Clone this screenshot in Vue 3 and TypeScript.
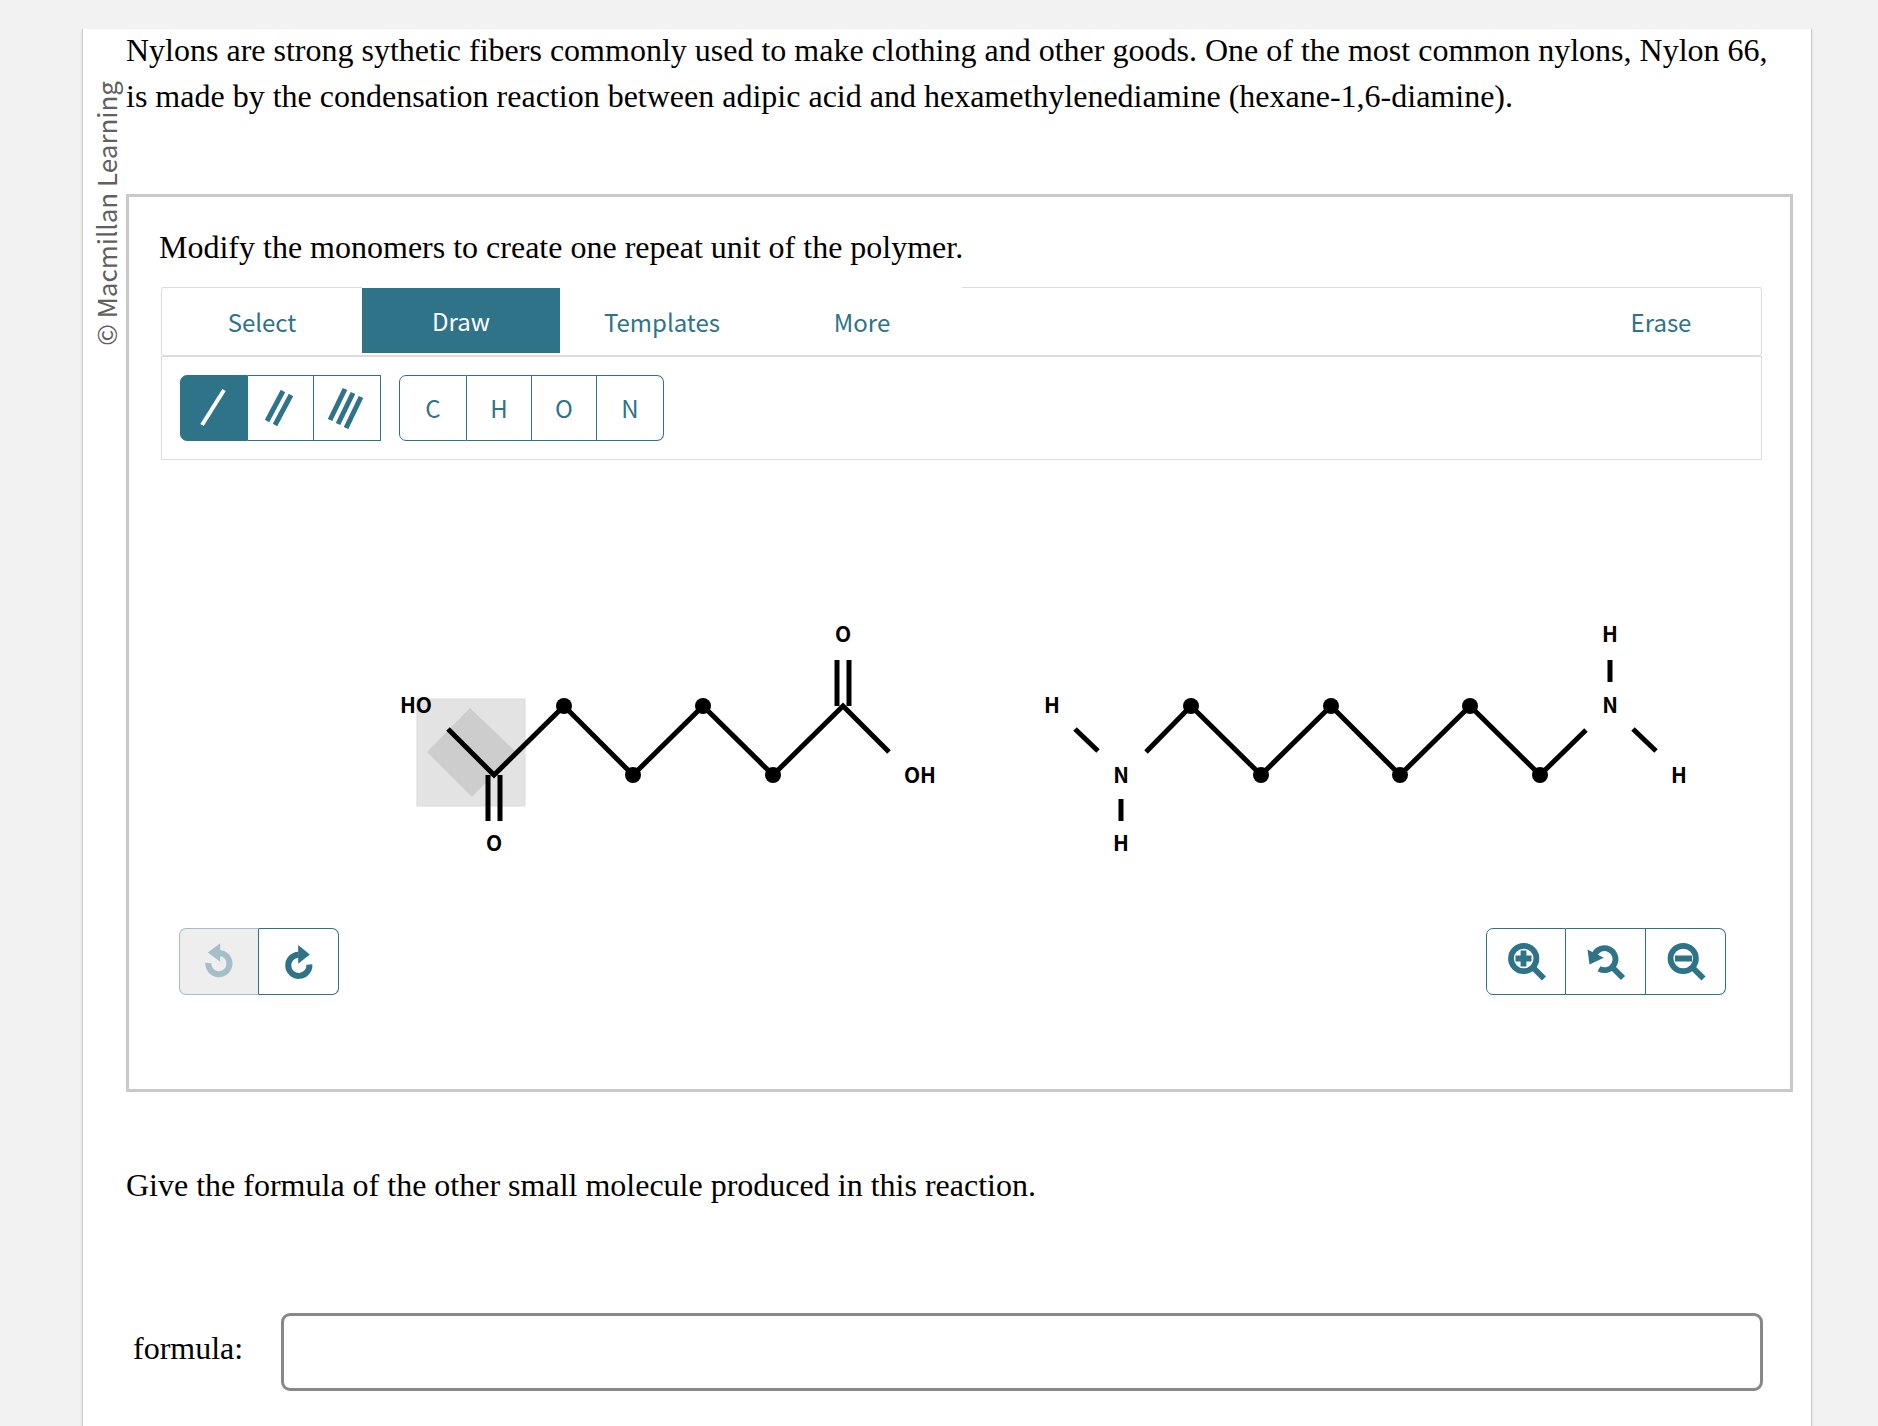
<script setup lang="ts">
import { ref } from 'vue'

type Point = [number, number]
interface Segment { from: Point; to: Point }
interface AtomLabel { text: string; x: number; y: number }

const leftTabs = ['Select', 'Draw', 'Templates', 'More']
const elements = ['C', 'H', 'O', 'N']
const bonds = [
  { name: 'Single bond', width: 4, lines: [[8, 38, 30, 3]] },
  { name: 'Double bond', width: 5, lines: [[6, 34, 22, 4], [14, 38, 30, 8]] },
  { name: 'Triple bond', width: 5, lines: [[3, 33, 18, 2], [11, 37, 26, 6], [19, 41, 34, 10]] },
]

const activeTab = ref('Draw')
const activeBond = ref('Single bond')
const formula = ref('')

const UP = 706
const DOWN = 775

const chains = [
  '448,729 494,775 564,706 633,775 703,706 773,775 843,706 889,752',
  '1146,752 1191,706 1261,775 1331,706 1400,775 1470,706 1540,775 1586,730',
]

const carbons: Point[] = [
  [564, UP], [633, DOWN], [703, UP], [773, DOWN],
  [1191, UP], [1261, DOWN], [1331, UP], [1400, DOWN], [1470, UP], [1540, DOWN],
]

const segments: Segment[] = [
  { from: [837, 660], to: [837, UP] },
  { from: [849, 660], to: [849, UP] },
  { from: [488, DOWN], to: [488, 821] },
  { from: [500, DOWN], to: [500, 821] },
  { from: [1075, 729], to: [1098, 751] },
  { from: [1121, 799], to: [1121, 821] },
  { from: [1610, 660], to: [1610, 682] },
  { from: [1633, 729], to: [1656, 751] },
]

const labels: AtomLabel[] = [
  { text: 'HO', x: 416, y: 713 },
  { text: 'O', x: 494, y: 851 },
  { text: 'O', x: 843, y: 642 },
  { text: 'OH', x: 920, y: 783 },
  { text: 'H', x: 1052, y: 713 },
  { text: 'N', x: 1121, y: 783 },
  { text: 'H', x: 1121, y: 851 },
  { text: 'H', x: 1610, y: 642 },
  { text: 'N', x: 1610, y: 713 },
  { text: 'H', x: 1679, y: 783 },
]
</script>

<template>
  <main class="page">
    <article class="card">
      <aside class="gutter"><span class="copyright">© Macmillan Learning</span></aside>
      <div class="content">
        <p class="text intro">
          Nylons are strong sythetic fibers commonly used to make clothing and other goods. One of the most common
          nylons, Nylon 66, is made by the condensation reaction between adipic acid and hexamethylenediamine
          (hexane-1,6-diamine).
        </p>

        <section class="frame">
          <p class="text">Modify the monomers to create one repeat unit of the polymer.</p>
          <div class="editor">
            <nav class="tabs">
              <button
                v-for="tab in leftTabs"
                :key="tab"
                type="button"
                class="tab"
                :class="{ active: tab === activeTab, lined: tab === 'Select' }"
                @click="activeTab = tab"
              >{{ tab }}</button>
              <span class="filler"></span>
              <button type="button" class="tab lined">Erase</button>
            </nav>

            <div class="tools">
              <div class="group bonds">
                <button
                  v-for="bond in bonds"
                  :key="bond.name"
                  type="button"
                  class="tool"
                  :class="{ active: bond.name === activeBond }"
                  :aria-label="bond.name"
                  @click="activeBond = bond.name"
                >
                  <svg width="40" height="42" viewBox="0 0 40 42" fill="none" stroke="currentColor" :stroke-width="bond.width">
                    <line v-for="(l, i) in bond.lines" :key="i" :x1="l[0]" :y1="l[1]" :x2="l[2]" :y2="l[3]" />
                  </svg>
                </button>
              </div>
              <div class="group elements">
                <button v-for="el in elements" :key="el" type="button" class="tool">{{ el }}</button>
              </div>
            </div>

            <svg class="canvas" viewBox="161 460 1601 468" role="img" aria-label="Adipic acid and hexamethylenediamine">
              <rect x="417" y="699" width="108" height="107" fill="#e3e3e3" stroke="#dadada" />
              <polygon points="470,708 427,752 472,797 516,752" fill="#cdcdcd" />
              <g fill="none" stroke="#000" stroke-width="5">
                <polyline v-for="c in chains" :key="c" :points="c" />
                <line
                  v-for="(s, i) in segments"
                  :key="i"
                  :x1="s.from[0]"
                  :y1="s.from[1]"
                  :x2="s.to[0]"
                  :y2="s.to[1]"
                />
              </g>
              <circle v-for="(c, i) in carbons" :key="i" :cx="c[0]" :cy="c[1]" r="8" />
              <text v-for="(a, i) in labels" :key="i" class="atom" :x="a.x" :y="a.y">{{ a.text }}</text>
            </svg>

            <div class="controls">
              <div class="group history">
                <button type="button" class="tool" aria-label="Undo" disabled>
                  <svg class="icon" viewBox="0 0 40 40">
                    <path d="M9.3 21A10.6 10.6 0 1 0 20.5 11" fill="none" stroke="currentColor" stroke-width="6" />
                    <path d="M8.8 10.5L21.2 1.2V19.8Z" fill="currentColor" />
                  </svg>
                </button>
                <button type="button" class="tool" aria-label="Redo">
                  <svg class="icon" viewBox="0 0 40 40">
                    <path d="M30.4 22.5A10.6 10.6 0 1 1 19.5 12.7" fill="none" stroke="currentColor" stroke-width="6" />
                    <path d="M30.8 12.5L19.2 3.1V21.8Z" fill="currentColor" />
                  </svg>
                </button>
              </div>
              <div class="group zoom">
                <button type="button" class="tool" aria-label="Zoom in">
                  <svg class="icon" viewBox="0 0 40 40" fill="none" stroke="currentColor" stroke-width="5.8">
                    <circle cx="17.7" cy="16.5" r="12.7" />
                    <path d="M27 25.5L38 36.5M9.5 16.5H25.5M17.5 8.5V24.5" />
                  </svg>
                </button>
                <button type="button" class="tool" aria-label="Reset zoom">
                  <svg class="icon" viewBox="0 0 40 40" fill="none" stroke="currentColor" stroke-width="5.8">
                    <path d="M8.5 12.6A11 11 0 1 1 13 26.7M27 26L37 36" />
                    <path d="M1.5 7.5L3.5 22.5L17.8 15.8Z" fill="currentColor" stroke="none" />
                  </svg>
                </button>
                <button type="button" class="tool" aria-label="Zoom out">
                  <svg class="icon" viewBox="0 0 40 40" fill="none" stroke="currentColor" stroke-width="5.8">
                    <circle cx="17.2" cy="16.5" r="12.7" />
                    <path d="M26.5 25.5L37.5 36.5M9 16.5H26" />
                  </svg>
                </button>
              </div>
            </div>
          </div>
        </section>

        <p class="text question">Give the formula of the other small molecule produced in this reaction.</p>

        <div class="answer">
          <label class="text" for="formula">formula:</label>
          <input id="formula" v-model="formula" type="text" autocomplete="off" />
        </div>
      </div>
    </article>
  </main>
</template>

<style>
body {
  margin: 0;
  background: #f2f2f2;
}
</style>

<style scoped>
* {
  box-sizing: border-box;
}

.page {
  display: flex;
  min-height: 100vh;
  padding: 29px 66px 0 82px;
  background: #f2f2f2;
}

.card {
  display: flex;
  flex: 1;
  min-width: 0;
  padding-right: 18px;
  background: #fff;
  border: solid #ccc;
  border-width: 0 1px;
  box-shadow: 0 2px 3px rgba(0, 0, 0, 0.12);
}

.gutter {
  flex: 0 0 43px;
  padding: 52px 0 0 6px;
}

.copyright {
  display: block;
  width: 34px;
  line-height: 34px;
  writing-mode: vertical-rl;
  text-orientation: sideways;
  transform: rotate(180deg);
  font-family: "Noto Sans CJK SC", "Open Sans", sans-serif;
  font-size: 26px;
  color: #606060;
  white-space: nowrap;
}

.content {
  flex: 1;
  min-width: 0;
}

.text {
  margin: 0;
  font: 32px/46px "Liberation Serif", "Times New Roman", serif;
  color: #000;
}

.intro {
  margin: -2px 0 75px;
}

.frame {
  padding: 27px 28px 94px 30px;
  border: 3px solid #c9c9c9;
}

.editor {
  margin: 17px 0 0 2px;
  font-family: "Noto Sans CJK SC", "Open Sans", sans-serif;
}

button {
  margin: 0;
  padding: 0;
  border: 0;
  background: none;
  font: inherit;
  font-size: 24px;
  line-height: 36px;
  color: #2f7389;
  cursor: pointer;
}

.tabs {
  display: flex;
  height: 69px;
  border: solid #dcdcdc;
  border-width: 0 1px 1px;
  border-radius: 4px;
}

.tab {
  flex: 0 0 200px;
  border-top: 1px solid transparent;
}

.lined,
.filler {
  border-top: 1px solid #dcdcdc;
}

.filler {
  flex: 1;
}

.tab.active {
  flex-basis: 198px;
  margin: 1px 2px 2px 0;
  border-top: 0;
  background: #2f7389;
  color: #fff;
}

.tools {
  display: flex;
  gap: 18px;
  padding: 18px;
  border: 1px solid #dcdcdc;
}

.group {
  display: flex;
}

.tool {
  display: flex;
  align-items: center;
  justify-content: center;
  width: 66px;
  height: 66px;
  border: 1px solid #2f7389;
}

.tool + .tool {
  border-left: 0;
}

.tool:first-child {
  width: 68px;
  border-radius: 7px 0 0 7px;
}

.tool:last-child {
  width: 67px;
  border-radius: 0 7px 7px 0;
}

.bonds .tool:last-child {
  border-radius: 0;
}

.elements .tool {
  width: 65px;
}

.elements .tool:first-child {
  width: 68px;
}

.elements .tool:last-child {
  width: 67px;
}

.tool.active {
  background: #2f7389;
  color: #fff;
}

.canvas {
  display: block;
  width: 100%;
  height: auto;
}

.atom {
  font: bold 21px "Noto Sans CJK SC", "Open Sans", sans-serif;
  text-anchor: middle;
}

.controls {
  display: flex;
  justify-content: space-between;
  padding: 0 36px 0 18px;
}

.controls .tool,
.controls .tool:first-child,
.controls .tool:last-child {
  width: 80px;
  height: 67px;
}

.controls .tool:disabled {
  border-color: #a5bfc9;
  border-right-color: #2f7389;
  background: #eee;
  color: #a5bfc9;
}

.icon {
  width: 40px;
  height: 40px;
}

.question {
  margin: 70px 0 105px;
}

.answer {
  display: flex;
  align-items: center;
  padding: 0 30px 32px 7px;
}

.answer label {
  flex: 0 0 148px;
  padding-bottom: 8px;
}

.answer input {
  flex: 1;
  min-width: 0;
  height: 78px;
  padding: 0 16px;
  border: 3px solid #888;
  border-radius: 9px;
  background: #fff;
  font: 32px "Liberation Serif", "Times New Roman", serif;
}
</style>
